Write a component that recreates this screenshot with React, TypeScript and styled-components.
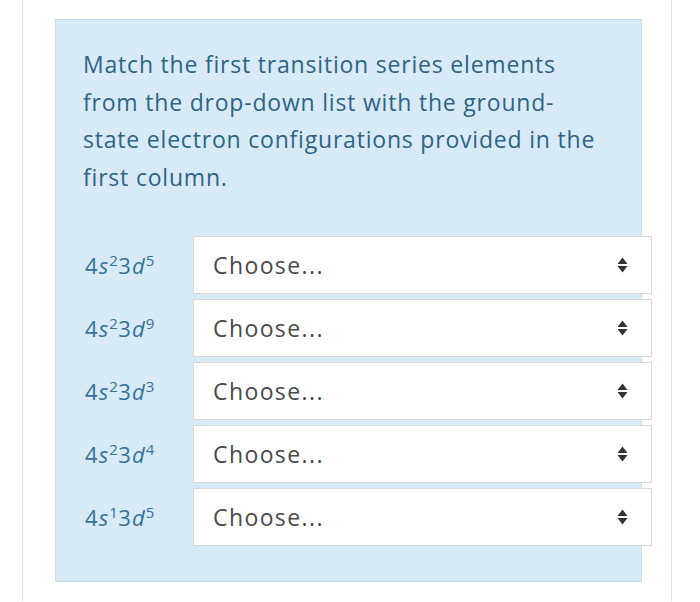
import React from "react";
import styled, { createGlobalStyle } from "styled-components";

const GlobalStyle = createGlobalStyle`
  html, body {
    margin: 0;
    padding: 0;
    background: #ffffff;
    font-family: "Open Sans", Lato, sans-serif;
  }
`;

const Card = styled.div`
  margin-left: 22px;
  width: 650px;
  height: 601px;
  border-left: 1px solid #dcdcdc;
  border-right: 1px solid #dcdcdc;
  box-sizing: border-box;
  padding-top: 19px;
`;

const Panel = styled.div`
  margin-left: 32px;
  width: 587px;
  box-sizing: border-box;
  background: #d9eaf7;
  border: 1px solid #c5def0;
  padding: 26px 0 35px 27px;
`;

const Question = styled.p`
  margin: 0 0 40px;
  max-width: 515px;
  font-size: 23px;
  line-height: 37.5px;
  letter-spacing: 0.8px;
  color: #2c6585;
`;

const Rows = styled.div`
  display: flex;
  flex-direction: column;
  gap: 5px;
`;

const Row = styled.div`
  display: grid;
  grid-template-columns: 110px 459px;
  align-items: center;
`;

const Label = styled.span`
  padding-left: 2px;
  font-size: 22px;
  color: #33739a;
  letter-spacing: 1.1px;
  em {
    font-style: italic;
  }
  sup {
    font-size: 15px;
    vertical-align: 8px;
    line-height: 0;
    letter-spacing: 0.5px;
  }
`;

const Select = styled.div`
  height: 58px;
  box-sizing: border-box;
  background: #ffffff;
  border: 1px solid #d9d9d9;
  display: flex;
  align-items: center;
  justify-content: space-between;
  padding: 0 23px 0 19px;
  font-size: 23px;
  letter-spacing: 1.4px;
  color: #4a4a4a;
`;

const Arrows = () => (
  <svg width="11" height="16" viewBox="0 0 11 16">
    <path d="M5.5 0.5 L10.5 7 L0.5 7 Z" fill="#333" />
    <path d="M5.5 15.5 L10.5 9 L0.5 9 Z" fill="#333" />
  </svg>
);

const configs: [string, string][] = [
  ["2", "5"],
  ["2", "9"],
  ["2", "3"],
  ["2", "4"],
  ["1", "5"],
];

const App = () => {
  return (
    <>
      <GlobalStyle />
      <Card>
        <Panel>
          <Question>
            Match the first transition series elements from the drop-down list
            with the ground-state electron configurations provided in the first
            column.
          </Question>
          <Rows>
            {configs.map(([s, d], i) => (
              <Row key={i}>
                <Label>
                  4<em>s</em>
                  <sup>{s}</sup>3<em>d</em>
                  <sup>{d}</sup>
                </Label>
                <Select>
                  <span>Choose...</span>
                  <Arrows />
                </Select>
              </Row>
            ))}
          </Rows>
        </Panel>
      </Card>
    </>
  );
};

export default App;
